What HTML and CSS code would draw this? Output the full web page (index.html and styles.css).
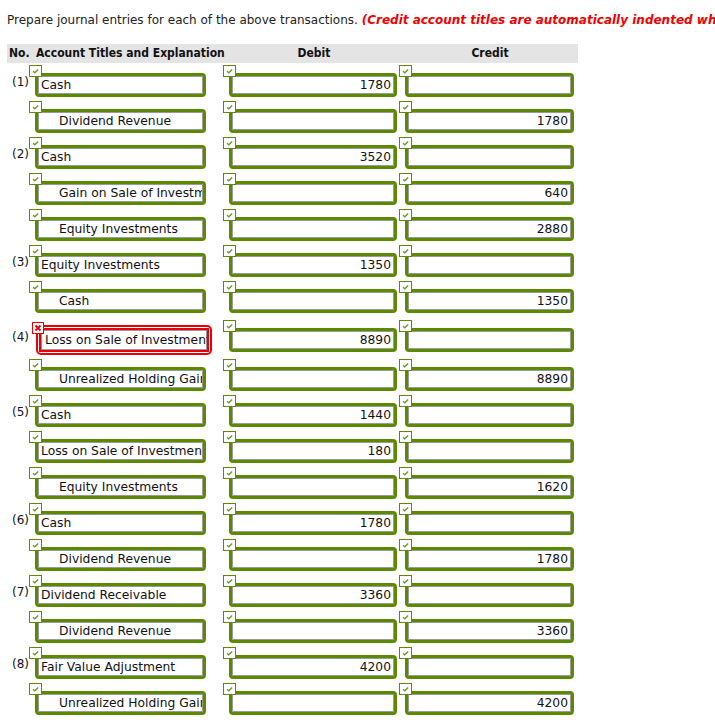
FILE: index.html
```html
<!DOCTYPE html>
<html lang="en">
<head>
    <meta charset="UTF-8">
    <meta name="viewport" content="width=device-width, initial-scale=1.0">
    <link rel="stylesheet" href="styles.css">
    <title>Journal Entries</title>
</head>
<body>

<div class="page">
    <p class="intro">Prepare journal entries for each of the above transactions. <em class="note">(Credit account titles are automatically indented when amount is entered. Do not indent manually.)</em></p>

    <div class="journal" id="journal">
        <div class="head">
            <div class="head-no">No.</div>
            <div class="head-acct">Account Titles and Explanation</div>
            <div class="head-debit">Debit</div>
            <div class="head-credit">Credit</div>
        </div>
    </div>
</div>

<script>
const entries = [
    { no: 1, acct: 'Cash', debit: '1780' },
    { acct: 'Dividend Revenue', credit: '1780', indent: true },
    { no: 2, acct: 'Cash', debit: '3520' },
    { acct: 'Gain on Sale of Investments', credit: '640', indent: true },
    { acct: 'Equity Investments', credit: '2880', indent: true },
    { no: 3, acct: 'Equity Investments', debit: '1350' },
    { acct: 'Cash', credit: '1350', indent: true },
    { no: 4, acct: 'Loss on Sale of Investments', debit: '8890', wrong: true },
    { acct: 'Unrealized Holding Gain or Loss\u2014Equity', credit: '8890', indent: true },
    { no: 5, acct: 'Cash', debit: '1440' },
    { acct: 'Loss on Sale of Investments', debit: '180' },
    { acct: 'Equity Investments', credit: '1620', indent: true },
    { no: 6, acct: 'Cash', debit: '1780' },
    { acct: 'Dividend Revenue', credit: '1780', indent: true },
    { no: 7, acct: 'Dividend Receivable', debit: '3360' },
    { acct: 'Dividend Revenue', credit: '3360', indent: true },
    { no: 8, acct: 'Fair Value Adjustment', debit: '4200' },
    { acct: 'Unrealized Holding Gain or Loss\u2014Equity', credit: '4200', indent: true }
];

const okMark = `<span class="mark mark-ok"><svg viewBox="0 0 11 10" width="11" height="10"><path d="M3 5.2l1.8 1.6L8.2 3.4" fill="none" stroke="#6b9a2a" stroke-width="1.4"/></svg></span>`;
const badMark = `<span class="mark mark-bad"><svg viewBox="0 0 10 10" width="10" height="10"><path d="M2.5 2.5l5 5M7.5 2.5l-5 5" fill="none" stroke="#e8000b" stroke-width="1.8"/></svg></span>`;

function field(text, kind, extra) {
    return `
        <div class="cell cell-${kind}">
            <div class="field field-${kind} ${extra || ''}">
                ${extra === 'wrong' ? badMark : okMark}
                <div class="value">${text || ''}</div>
            </div>
        </div>`;
}

const journal = document.getElementById('journal');

entries.forEach(e => {
    const row = document.createElement('div');
    row.className = e.wrong ? 'row row-wrong' : 'row';
    row.innerHTML = `
        <div class="no">${e.no ? '(' + e.no + ')' : ''}</div>
        ${field(e.acct, 'acct', e.wrong ? 'wrong' : (e.indent ? 'indent' : ''))}
        ${field(e.debit, 'debit')}
        ${field(e.credit, 'credit')}
    `;
    journal.appendChild(row);
});
</script>
</body>
</html>
```

FILE: styles.css
```css
body {
    margin: 0;
    font-family: "DejaVu Sans", Verdana, sans-serif;
    font-size: 12px;
    color: #222;
    background: #fff;
}
.page {
    padding: 13px 0 0 7px;
    overflow: hidden;
}
.intro {
    margin: 0;
    line-height: 15px;
    white-space: nowrap;
}
.note {
    color: #f00000;
    font-weight: bold;
}
.journal {
    margin-top: 16px;
    width: 571px;
}
.head {
    display: grid;
    grid-template-columns: 22px 193px 176px 180px;
    background-color: #e4e4e4;
    height: 19px;
    line-height: 19px;
    font-weight: bold;
    font-stretch: condensed;
    white-space: nowrap;
    color: #111;
}
.head-no {
    padding-left: 2px;
}
.head-acct {
    padding-left: 7px;
}
.head-debit {
    text-align: center;
    padding-left: 8px;
}
.head-credit {
    text-align: center;
    padding-left: 4px;
}
.row {
    display: grid;
    grid-template-columns: 22px 193px 176px 180px;
    align-items: center;
    margin-top: 12px;
}
.head + .row {
    margin-top: 10px;
}
.no {
    text-align: right;
    color: #112;
    margin-bottom: 7px;
}
.cell {
    display: flex;
}
.cell-acct {
    padding-left: 6px;
}
.cell-debit,
.cell-credit {
    padding-left: 7px;
}
.field {
    position: relative;
    height: 24px;
    border: 3px solid #5b8a00;
    border-radius: 4px;
    box-sizing: border-box;
    display: flex;
}
.field-acct { width: 171px; }
.field-debit { width: 168px; }
.field-credit { width: 169px; }
.value {
    flex: 1;
    border: 1px solid #9a9a9a;
    background: #fff;
    padding: 0 2px 0 2px;
    font-size: 12.3px;
    line-height: 16px;
    white-space: nowrap;
    overflow: hidden;
    color: #111;
}
.field-debit .value,
.field-credit .value {
    text-align: right;
}
.indent .value {
    padding-left: 20px;
}
.field.wrong {
    width: 176px;
    height: 30px;
    margin-left: 1px;
    border: 2px solid #e8000b;
    padding: 1px;
    border-radius: 5px;
    box-shadow: inset 0 0 0 1px #fff;
}
.wrong .value {
    border: 2px solid #e8000b;
    box-shadow: inset 0 0 0 1px #9a9a9a;
    padding-left: 4px;
    line-height: 20px;
}
.mark {
    position: absolute;
    left: -9px;
    top: -11px;
    width: 11px;
    height: 10px;
    border: 1px solid #5b8a00;
    background: #fff;
    display: flex;
}
.mark-bad {
    left: -6px;
    top: -5px;
    width: 10px;
    height: 10px;
    border-color: #e8000b;
}
```
